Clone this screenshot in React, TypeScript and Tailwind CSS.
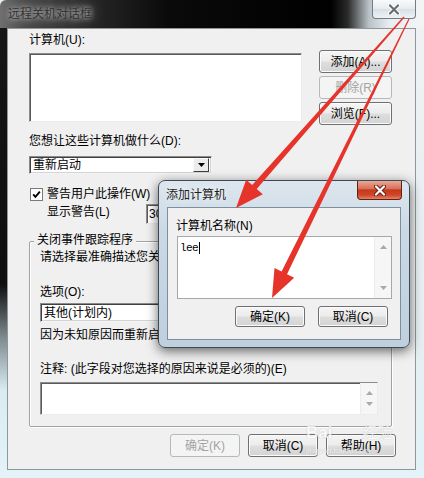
import React from 'react';

type Pt = [number, number];

// tapered red annotation arrow, computed from origin/tip
function arrowPoints(o: Pt, t: Pt, w0: number, w1: number, L: number, H: number) {
  const dx = t[0] - o[0];
  const dy = t[1] - o[1];
  const len = Math.hypot(dx, dy);
  const ux = dx / len;
  const uy = dy / len;
  const nx = -uy;
  const ny = ux;
  const bx = t[0] - ux * L;
  const by = t[1] - uy * L;
  const pts: Pt[] = [
    [o[0] + nx * w0, o[1] + ny * w0],
    [bx + nx * w1, by + ny * w1],
    [bx + nx * H, by + ny * H],
    t,
    [bx - nx * H, by - ny * H],
    [bx - nx * w1, by - ny * w1],
    [o[0] - nx * w0, o[1] - ny * w0],
  ];
  return pts.map((p) => p.map((v) => v.toFixed(1)).join(',')).join(' ');
}

function Btn({ children, disabled, className }: { children: React.ReactNode; disabled?: boolean; className: string }) {
  return (
    <div
      className={
        'flex items-center justify-center rounded-[3px] border text-[12px] leading-[16px] whitespace-nowrap ' +
        (disabled
          ? 'border-[#b5b9bc] bg-[#f4f4f4] text-[#a3a3a3] '
          : 'border-[#707070] bg-[linear-gradient(#f5f5f5,#ececec_48%,#dedede_52%,#d3d3d3)] text-black shadow-[inset_0_0_0_1px_#fbfbfb] ') +
        className
      }
    >
      {children}
    </div>
  );
}

function Tri({ up }: { up?: boolean }) {
  return (
    <svg width="7" height="4" viewBox="0 0 7 4">
      <path d={up ? 'M0 4h7L3.5 0z' : 'M0 0h7L3.5 4z'} fill="#a9a9a9" />
    </svg>
  );
}

function VScroll() {
  return (
    <div className="ml-auto flex h-full w-[17px] flex-col items-center justify-between border-l border-[#ececec] bg-[#f6f6f6] py-[8px]">
      <Tri up />
      <Tri />
    </div>
  );
}

function Combo({ text, className }: { text: string; className: string }) {
  return (
    <div
      className={
        'flex items-center border border-[#8a8a8a] border-b-[#f4f4f4] border-r-[#f4f4f4] bg-white shadow-[inset_1px_1px_0_#404040,inset_-1px_-1px_0_#d4d4d4] ' +
        className
      }
    >
      <span className="pl-[3px] text-[12px] leading-[16px] whitespace-nowrap">{text}</span>
      <div className="mr-[2px] ml-auto flex h-[14px] w-[16px] items-center justify-center border border-[#fafafa] border-b-[#404040] border-r-[#404040] bg-[#ececec]">
        <svg width="7" height="4" viewBox="0 0 7 4">
          <path d="M0 0h7L3.5 4z" fill="#000" />
        </svg>
      </div>
    </div>
  );
}

const sunken =
  'border border-[#8c8c8c] border-b-[#ececec] border-r-[#ececec] bg-white shadow-[inset_1px_1px_0_#5a5a5a]';

export default function App() {
  return (
    <div className="relative h-[478px] w-[424px] overflow-hidden bg-[#e3f2f6] font-['Liberation_Sans','Noto_Sans_CJK_SC',sans-serif] text-black">
      {/* main window */}
      <div className="flex h-[478px] w-[424px] flex-col">
        <div className="flex h-[28px] items-start rounded-tl-[6px] bg-[linear-gradient(90deg,#707070_0%,#4a4a4a_6%,#262626_22%,#0a0a0a_40%,#000_78%,#2a2a2a_82%,#b9c2c7_87%,#e9eef1_92%,#f2f5f6)]">
          <div className="ml-[8px] mt-[6px] text-[12px] leading-[16px] text-[#333] [text-shadow:0_0_5px_#c9c9c9,0_0_10px_#9a9a9a,0_0_16px_#777]">
            远程关机对话框
          </div>
          <div className="mr-[8px] ml-auto flex h-[19px] w-[44px] items-center justify-center rounded-b-[4px] border border-t-0 border-[#737b84] bg-[linear-gradient(#f8fafb,#e6ebef_50%,#d9e0e5_52%,#eef2f5)]">
            <svg width="12" height="11" viewBox="0 0 12 11">
              <path d="M2 1.5l8 8M10 1.5l-8 8" stroke="#fff" strokeWidth="4.2" strokeLinecap="round" />
              <path d="M2 1.5l8 8M10 1.5l-8 8" stroke="#676b70" strokeWidth="2.2" strokeLinecap="round" />
            </svg>
          </div>
        </div>
        <div className="flex h-[442px]">
          <div className="w-[7px] bg-[linear-gradient(#161616,#0e0e0e_58%,#7d8a8e_70%,#d8ecf1_82%,#e3f3f7)]" />
          <div className="h-[442px] w-[409px] border border-[#8e979e] bg-[#f0f0f0] pt-[3px] pl-[21px]">
            <div className="flex">
              <div className="w-[273px]">
                <div className="h-[16px] text-[12px] leading-[16px]">计算机(U):</div>
                <div className={'mt-[5px] h-[69px] ' + sunken} />
              </div>
              <div className="mt-[18px] ml-[17px] flex flex-col gap-[3px]">
                <Btn className="h-[23px] w-[73px]">添加(A)...</Btn>
                <Btn disabled className="h-[23px] w-[73px]">删除(R)</Btn>
                <Btn className="h-[23px] w-[73px]">浏览(F)...</Btn>
              </div>
            </div>
            <div className="mt-[8px] h-[16px] text-[12px] leading-[16px]">您想让这些计算机做什么(D):</div>
            <Combo text="重新启动" className="mt-[7px] h-[18px] w-[183px]" />
            <div className="mt-[12px] flex h-[16px] items-center">
              <div className="ml-[1px] flex h-[13px] w-[13px] items-center justify-center border border-[#7a7a7a] bg-white">
                <svg width="9" height="9" viewBox="0 0 9 9">
                  <path d="M1.2 4.4l2.2 2.4L7.9 1.6" stroke="#000" strokeWidth="1.9" fill="none" />
                </svg>
              </div>
              <div className="ml-[4px] text-[12px] leading-[16px] whitespace-nowrap">警告用户此操作(W)</div>
            </div>
            <div className="mt-[2px] flex h-[20px] items-start">
              <div className="ml-[18px] w-[99px] text-[12px] leading-[16px]">显示警告(L)</div>
              <div className={'flex h-[20px] w-[60px] items-center pl-[2px] text-[12px] ' + sunken}>30</div>
            </div>
            <div className="relative mt-[17px] h-[186px] w-[363px] rounded-[2px] border border-[#a2a2a2] pt-[7px] pl-[10px] shadow-[inset_1px_1px_0_#fff,1px_1px_0_#fff]">
              <div className="absolute top-[-10px] left-[4px] bg-[#f0f0f0] px-[3px] text-[12px] leading-[16px] whitespace-nowrap">
                关闭事件跟踪程序
              </div>
              <div className="h-[16px] text-[12px] leading-[16px] whitespace-nowrap">请选择最准确描述您关</div>
              <div className="mt-[19px] h-[16px] text-[12px] leading-[16px]">选项(O):</div>
              <Combo text="其他(计划内)" className="mt-[3px] h-[19px] w-[260px]" />
              <div className="mt-[5px] h-[16px] text-[12px] leading-[16px] whitespace-nowrap">因为未知原因而重新启</div>
              <div className="mt-[18px] h-[16px] text-[12px] leading-[16px] whitespace-nowrap">
                注释: (此字段对您选择的原因来说是必须的)(E)
              </div>
              <div className={'mt-[5px] flex h-[33px] w-[338px] ' + sunken}>
                <VScroll />
              </div>
            </div>
            <div className="mt-[7px] ml-[141px] flex gap-[8px]">
              <Btn disabled className="h-[23px] w-[70px]">确定(K)</Btn>
              <Btn className="h-[23px] w-[70px]">取消(C)</Btn>
              <Btn className="h-[23px] w-[70px]">帮助(H)</Btn>
            </div>
          </div>
          <div className="w-[8px] bg-[linear-gradient(#eef2f4,#e6eef1_60%,#e2f2f6)]" />
        </div>
        <div className="h-[8px] bg-[#e3f3f7]" />
      </div>

      {/* add computer dialog */}
      <div className="absolute top-[180px] left-[158px] flex h-[168px] w-[252px] flex-col rounded-[7px] border border-[#3d4955] bg-[linear-gradient(#dde6ee,#cbd9e5_30%,#bfcfde)] shadow-[0_3px_12px_rgba(0,0,0,0.6)]">
        <div className="flex h-[26px] items-start">
          <div className="mt-[6px] ml-[7px] text-[12px] leading-[16px] text-[#1e1e1e] [text-shadow:0_0_6px_#fff]">添加计算机</div>
          <div className="mr-[7px] ml-auto flex h-[19px] w-[45px] items-center justify-center rounded-b-[4px] border border-t-0 border-[#5e2216] bg-[linear-gradient(#eaa896,#d9705a_42%,#c63a1c_50%,#cf4526_78%,#e58466)]">
            <svg width="12" height="11" viewBox="0 0 12 11">
              <path d="M2 1.5l8 8M10 1.5l-8 8" stroke="#6a2214" strokeWidth="4.2" strokeLinecap="round" />
              <path d="M2 1.5l8 8M10 1.5l-8 8" stroke="#fff" strokeWidth="2.2" strokeLinecap="round" />
            </svg>
          </div>
        </div>
        <div className="mx-[8px] h-[133px] border border-[#7d8e9f] bg-[#f0f0f0] pt-[10px]">
          <div className="ml-[8px] h-[16px] text-[12px] leading-[16px]">计算机名称(N)</div>
          <div className="mt-[2px] ml-[9px] flex h-[63px] w-[215px] border border-[#a5a9ae] bg-white">
            <div className="flex h-[16px] items-center pt-[6px] pl-[2px]">
              <span className="font-['Liberation_Mono',monospace] text-[11px] leading-[12px] tracking-[-0.6px]">lee</span>
              <span className="ml-[1px] h-[12px] w-[1px] bg-black" />
            </div>
            <VScroll />
          </div>
          <div className="mt-[7px] ml-[67px] flex gap-[13px]">
            <Btn className="h-[21px] w-[70px]">确定(K)</Btn>
            <Btn className="h-[21px] w-[70px]">取消(C)</Btn>
          </div>
        </div>
      </div>

      {/* watermark */}
      <div className="absolute top-[424px] left-[306px] flex flex-col items-start opacity-70">
        <div className="flex items-end">
          <span className="text-[17px] leading-[18px] font-bold text-white [text-shadow:0_0_1px_#9a9a9a]">Bai</span>
          <span className="ml-[30px] text-[15px] leading-[18px] text-white [text-shadow:0_0_1px_#9a9a9a]">经验</span>
        </div>
        <span className="mt-[4px] text-[8px] leading-[9px] text-white [text-shadow:0_0_1px_#9a9a9a]">jingyan.baidu.com</span>
      </div>

      {/* red annotation arrows */}
      <svg className="pointer-events-none absolute top-0 left-0" width="424" height="478" viewBox="0 0 424 478">
        <polygon points={arrowPoints([404, 17], [236, 208], 0.6, 3, 28, 11)} fill="#e6342b" />
        <polygon points={arrowPoints([409, 19], [272, 298], 0.6, 3, 28, 11)} fill="#e6342b" />
      </svg>
    </div>
  );
}
